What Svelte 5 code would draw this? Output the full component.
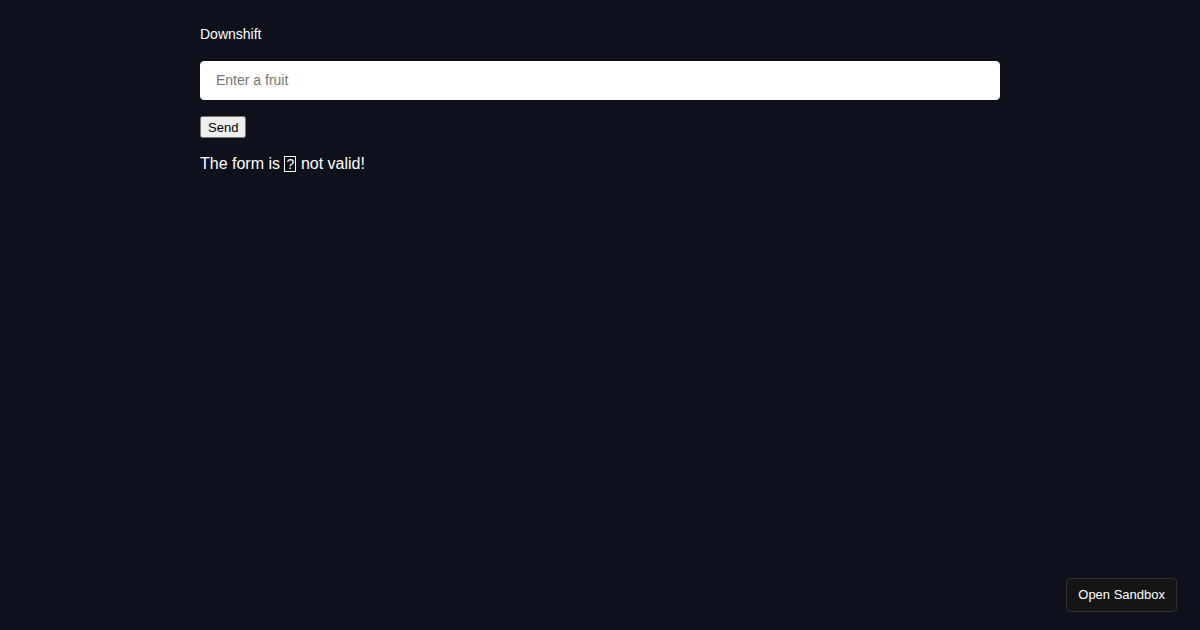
<script lang="ts">
  let fruit = ''
  let fruits = ['Apple', 'Banana', 'Orange', 'Pineapple']
  $: valid = fruits.includes(fruit)
</script>
<form on:submit|preventDefault>
  <label for="fruit">Downshift</label>
  <input id="fruit" type="text" placeholder="Enter a fruit" autocomplete="off" bind:value={fruit}>
  <button class="send" type="submit">Send</button>
  <p>The form is {#if valid}valid!{:else}<span class="mark">?</span> not valid!{/if}</p>
</form>
<button class="open-sandbox" type="button">Open Sandbox</button>

<style>
  :global(body)
  {
    background: #0e101c;
    color: white;
    font-family: "Liberation Sans", Arial, sans-serif;
  }
  form
  {
    max-width: 800px;
    margin: 0 auto;
    padding-top: 26px;
  }
  label
  {
    display: block;
    margin-bottom: 19px;
    font-size: 14px;
    line-height: 16px;
  }
  input
  {
    display: block;
    box-sizing: border-box;
    width: 100%;
    height: 39px;
    margin-bottom: 16px;
    padding: 9px 15px 11px;
    border: 1px solid white;
    border-radius: 4px;
    font-family: inherit;
    font-size: 14px;
  }
  .send
  {
    display: block;
    height: 22px;
    font-family: inherit;
    font-size: 13px;
  }
  p
  {
    margin: 16px 0;
    font-size: 16px;
    line-height: 20px;
  }
  .mark
  {
    display: inline-block;
    box-sizing: border-box;
    width: 12px;
    height: 16px;
    border: 1px solid white;
    font-size: 14px;
    line-height: 14px;
    text-align: center;
  }
  .open-sandbox
  {
    position: fixed;
    right: 23px;
    bottom: 18px;
    padding: 8px 11px;
    border: 1px solid #333333;
    border-radius: 4px;
    background: #151515;
    color: white;
    font-family: inherit;
    font-size: 13px;
    line-height: 16px;
  }
</style>
